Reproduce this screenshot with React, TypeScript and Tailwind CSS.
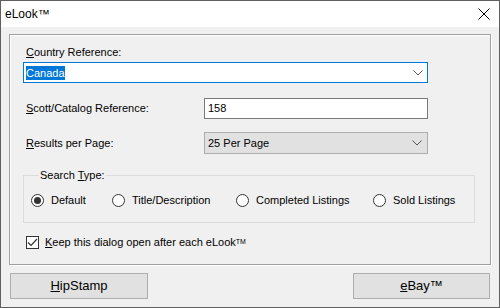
import React, { useState } from 'react';

type SearchType = 'default' | 'title' | 'completed' | 'sold';

interface RadioOption {
  id: SearchType;
  label: React.ReactNode;
  width: string;
}

const options: RadioOption[] = [
  { id: 'default', label: 'Default', width: 'w-[81px]' },
  { id: 'title', label: 'Title/Description', width: 'w-[124px]' },
  { id: 'completed', label: 'Completed Listings', width: 'w-[137px]' },
  { id: 'sold', label: 'Sold Listings', width: 'w-[90px]' },
];

const Chevron: React.FC = () => (
  <svg width="10" height="6" viewBox="0 0 10 6" className="shrink-0">
    <polyline points="0.5,0.5 5,5 9.5,0.5" fill="none" stroke="#555" strokeWidth="1" />
  </svg>
);

const Radio: React.FC<{ checked: boolean }> = ({ checked }) => (
  <span className="w-[13px] h-[13px] rounded-full border border-[#333] bg-white flex items-center justify-center shrink-0">
    {checked && <span className="w-[7px] h-[7px] rounded-full bg-[#333]" />}
  </span>
);

const App: React.FC = () => {
  const [searchType, setSearchType] = useState<SearchType>('default');
  const [keepOpen, setKeepOpen] = useState<boolean>(true);

  return (
    <div className="w-[500px] h-[308px] bg-[#f0f0f0] border border-[#5f5f5f] text-black text-[11px] font-['Liberation_Sans',Arial,sans-serif] overflow-hidden">
      {/* title bar */}
      <div className="h-[26px] bg-white flex items-center justify-between pl-[4px] pr-[9px]">
        <span className="text-[12px]">eLook™</span>
        <svg width="12" height="12" viewBox="0 0 12 12">
          <path d="M0.5 0.5 L11.5 11.5 M11.5 0.5 L0.5 11.5" stroke="#000" strokeWidth="1" />
        </svg>
      </div>

      <div className="ml-[8px] mt-[7px] w-[482px] h-[231px] border border-[#a0a0a0] shadow-[1px_1px_0_#fff,inset_1px_1px_0_#fff] flex flex-col">
        <div className="ml-[16px] mt-[11px] leading-[13px]">
          <span className="underline">C</span>ountry Reference:
        </div>
        <div className="ml-[13px] mt-[3px] w-[405px] h-[21px] border border-[#0078d7] bg-white flex items-center justify-between pl-[2px] pr-[4px]">
          <span className="bg-[#0078d7] text-white leading-[14px]">Canada</span>
          <Chevron />
        </div>

        <div className="flex items-center mt-[15px] pl-[16px]">
          <span className="w-[178px]">
            <span className="underline">S</span>cott/Catalog Reference:
          </span>
          <div className="w-[224px] h-[21px] border border-[#7a7a7a] bg-white flex items-center pl-[3px]">158</div>
        </div>

        <div className="flex items-center mt-[13px] pl-[16px]">
          <span className="w-[178px]">
            <span className="underline">R</span>esults per Page:
          </span>
          <div className="w-[224px] h-[22px] border border-[#adadad] bg-[#e1e1e1] flex items-center justify-between pl-[3px] pr-[5px]">
            <span>25 Per Page</span>
            <Chevron />
          </div>
        </div>

        <fieldset className="ml-[13px] mt-[15px] w-[452px] border border-[#dcdcdc] pl-[7px] pb-[15px]">
          <legend className="ml-[8px] px-[1px] leading-[13px]">
            Search <span className="underline">T</span>ype:
          </legend>
          <div className="flex items-center mt-[12px]">
            {options.map((opt) => (
              <button
                key={opt.id}
                onClick={() => setSearchType(opt.id)}
                className={`${opt.width} flex items-center gap-[7px] text-left shrink-0`}
              >
                <Radio checked={searchType === opt.id} />
                <span className="leading-[13px] whitespace-nowrap">{opt.label}</span>
              </button>
            ))}
          </div>
        </fieldset>

        <button
          onClick={() => setKeepOpen(!keepOpen)}
          className="ml-[16px] mt-[13px] flex items-center gap-[6px] self-start"
        >
          <span className="w-[13px] h-[13px] border border-[#333] bg-white flex items-center justify-center">
            {keepOpen && (
              <svg width="11" height="11" viewBox="0 0 11 11">
                <polyline points="1,5.5 4,8.5 10,2" fill="none" stroke="#333" strokeWidth="1.2" />
              </svg>
            )}
          </span>
          <span className="leading-[13px]">
            <span className="underline">K</span>eep this dialog open after each eLook
            <span className="text-[7px] align-top relative -top-[1px]">TM</span>
          </span>
        </button>
      </div>

      <footer className="flex justify-between mt-[8px] pl-[9px] pr-[9px]">
        <button className="w-[138px] h-[26px] border border-[#adadad] bg-[#e1e1e1] text-[13px]">
          <span className="underline">H</span>ipStamp
        </button>
        <button className="w-[137px] h-[26px] border border-[#adadad] bg-[#e1e1e1] text-[13px]">
          <span className="underline">e</span>Bay™
        </button>
      </footer>
    </div>
  );
};

export default App;
